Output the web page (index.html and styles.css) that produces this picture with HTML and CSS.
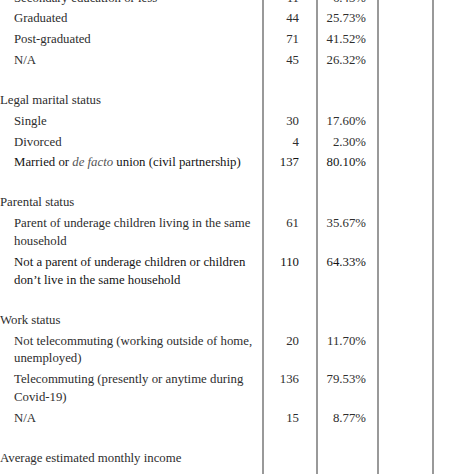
FILE: index.html
```html
<!DOCTYPE html>
<html lang="en">
<head>
<meta charset="utf-8">
<title>Sample characteristics</title>
<link rel="stylesheet" href="styles.css">
</head>
<body>
<table class="stats">
  <colgroup>
    <col class="c-label">
    <col class="c-n">
    <col class="c-p">
    <col class="c-x">
    <col class="c-y">
  </colgroup>
  <tbody>
    <tr><td class="label">Secondary education or less</td><td class="n">11</td><td class="p">6.43%</td><td class="x"></td><td class="y"></td></tr>
    <tr><td class="label">Graduated</td><td class="n">44</td><td class="p">25.73%</td><td class="x"></td><td class="y"></td></tr>
    <tr><td class="label">Post-graduated</td><td class="n">71</td><td class="p">41.52%</td><td class="x"></td><td class="y"></td></tr>
    <tr><td class="label">N/A</td><td class="n">45</td><td class="p">26.32%</td><td class="x"></td><td class="y"></td></tr>

    <tr class="head"><td class="section">Legal marital status</td><td class="n"></td><td class="p"></td><td class="x"></td><td class="y"></td></tr>
    <tr><td class="label">Single</td><td class="n">30</td><td class="p">17.60%</td><td class="x"></td><td class="y"></td></tr>
    <tr><td class="label">Divorced</td><td class="n">4</td><td class="p">2.30%</td><td class="x"></td><td class="y"></td></tr>
    <tr class="dark"><td class="label">Married or <i>de facto</i> union (civil partnership)</td><td class="n">137</td><td class="p">80.10%</td><td class="x"></td><td class="y"></td></tr>

    <tr class="head"><td class="section">Parental status</td><td class="n"></td><td class="p"></td><td class="x"></td><td class="y"></td></tr>
    <tr><td class="label">Parent of underage children living in the same<br>household</td><td class="n">61</td><td class="p">35.67%</td><td class="x"></td><td class="y"></td></tr>
    <tr class="dark"><td class="label">Not a parent of underage children or children<br>don’t live in the same household</td><td class="n">110</td><td class="p">64.33%</td><td class="x"></td><td class="y"></td></tr>

    <tr class="head"><td class="section">Work status</td><td class="n"></td><td class="p"></td><td class="x"></td><td class="y"></td></tr>
    <tr><td class="label">Not telecommuting (working outside of home,<br>unemployed)</td><td class="n">20</td><td class="p">11.70%</td><td class="x"></td><td class="y"></td></tr>
    <tr><td class="label">Telecommuting (presently or anytime during<br>Covid-19)</td><td class="n">136</td><td class="p">79.53%</td><td class="x"></td><td class="y"></td></tr>
    <tr><td class="label">N/A</td><td class="n">15</td><td class="p">8.77%</td><td class="x"></td><td class="y"></td></tr>

    <tr class="head"><td class="section">Average estimated monthly income</td><td class="n"></td><td class="p"></td><td class="x"></td><td class="y"></td></tr>
    <tr class="tail"><td class="label"></td><td class="n"></td><td class="p"></td><td class="x"></td><td class="y"></td></tr>
  </tbody>
</table>
</body>
</html>
```

FILE: styles.css
```css
html, body {
  margin: 0;
  padding: 0;
  background: #ffffff;
  overflow: hidden;
}

.stats {
  margin-top: -12px;
  border-collapse: separate;
  border-spacing: 0;
  table-layout: fixed;
  width: 494px;
  font-family: "Liberation Serif", "Times New Roman", serif;
  font-size: 12.8px;
  line-height: 17.8px;
  color: #2e2e2e;
}

.c-label { width: 264px; }
.c-n { width: 54px; }
.c-p { width: 61px; }
.c-x { width: 55px; }
.c-y { width: 60px; }

.stats td {
  box-sizing: border-box;
  padding: 1.5px 0;
  vertical-align: top;
  white-space: nowrap;
}

.stats td.label,
.stats td.section {
  width: 264px;
  border-right: 2px solid #999999;
}

.stats td.label {
  padding-left: 14px;
}

.stats td.section {
  padding-left: 0;
}

.stats td.n {
  width: 54px;
  text-align: right;
  padding-right: 17px;
  border-right: 2px solid #999999;
}

.stats td.p {
  width: 61px;
  text-align: right;
  padding-right: 11px;
  border-right: 2px solid #999999;
}

.stats td.x {
  width: 55px;
  border-right: 2px solid #999999;
}

.stats td.y {
  width: 60px;
}

.stats tr.head td {
  padding-top: 20.8px;
}

.stats tr.tail td {
  height: 6px;
  padding: 0;
}

.stats tr.dark td {
  color: #141414;
}

.stats tr.dark i {
  color: #555555;
}
```
